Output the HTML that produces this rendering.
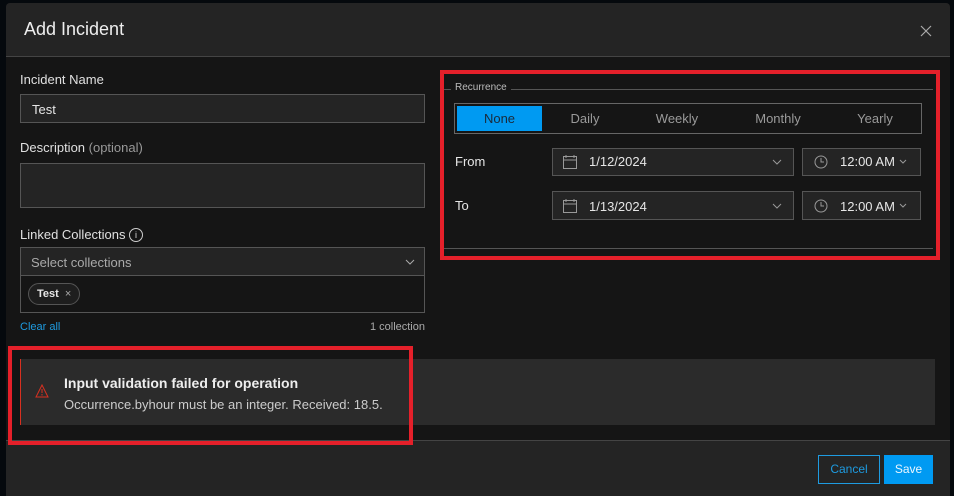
<!DOCTYPE html><html><head><style>
*{box-sizing:border-box;margin:0;padding:0}
body{width:954px;height:496px;background:#05090d;font-family:"Liberation Sans",sans-serif;position:relative;overflow:hidden;color:#e6e6e6}
.a{position:absolute}
.modal{left:6px;top:3px;width:944px;height:493px;background:#151515;border-radius:4px 4px 0 0;overflow:hidden}
.hdr{left:0;top:0;width:944px;height:54px;background:#242424;border-bottom:1px solid #444}
.inp{background:#242424;border:1px solid #555}
.lbl{font-size:13px;color:#e0e0e0}
.red{border:4px solid #e5202a}
.seg{font-size:13px;color:#9a9a9a;text-align:center;top:0;height:26px;line-height:26px}
.sm{font-size:13px;color:#e6e6e6}
</style></head><body>
<div class="a modal">
 <div class="a hdr"><div class="a" style="left:18px;top:16px;font-size:18px;color:#eee">Add Incident</div>
 <svg class="a" style="left:914px;top:22px" width="12" height="12"><path d="M1 1L11 11M11 1L1 11" stroke="#aaa" stroke-width="1.2"/></svg></div>
 <div class="a" style="left:0;top:437px;width:944px;height:56px;background:#242424;border-top:1px solid #444"></div>
</div>
<div class="a lbl" style="left:20px;top:72px">Incident Name</div>
<div class="a inp" style="left:20px;top:94px;width:405px;height:29px"><span class="a sm" style="left:11px;top:7px">Test</span></div>
<div class="a lbl" style="left:20px;top:140px">Description <span style="color:#999">(optional)</span></div>
<div class="a inp" style="left:20px;top:163px;width:405px;height:45px"></div>
<div class="a lbl" style="left:20px;top:227px">Linked Collections</div>
<div class="a" style="left:129px;top:228px;width:14px;height:14px;border:1px solid #ccc;border-radius:50%;font-size:9px;text-align:center;line-height:12px;color:#ddd">i</div>
<div class="a inp" style="left:20px;top:247px;width:405px;height:29px"><span class="a" style="left:10px;top:7px;font-size:13px;color:#aaa">Select collections</span><svg class="a" style="left:384px;top:11px" width="10" height="6"><path d="M1 1L5 5L9 1" stroke="#aaa" fill="none"/></svg></div>
<div class="a" style="left:20px;top:275px;width:405px;height:38px;border:1px solid #555;border-top:none"></div>
<div class="a" style="left:28px;top:283px;width:52px;height:22px;border:1px solid #555;border-radius:11px;background:#1e1e1e;font-size:11px;font-weight:bold;line-height:20px;padding-left:8px">Test <span style="font-weight:normal;color:#aaa;margin-left:3px">×</span></div>
<div class="a" style="left:20px;top:321px;font-size:11px;color:#1e9be0">Clear all</div>
<div class="a" style="left:366px;top:321px;width:59px;text-align:right;font-size:11px;color:#aaa">1 collection</div>

<div class="a red" style="left:440px;top:70px;width:500px;height:190px"></div>
<div class="a" style="left:444px;top:89px;width:489px;border-top:1px solid #555"></div>
<div class="a" style="left:451px;top:82px;padding:0 4px;background:#151515;font-size:10px;color:#bbb">Recurrence</div>
<div class="a" style="left:444px;top:248px;width:489px;border-top:1px solid #555"></div>
<div class="a" style="left:454px;top:103px;width:468px;height:31px;border:1px solid #666">
 <div class="a seg" style="left:2px;top:2px;width:85px;height:25px;background:#009af2;color:#1a2a3a">None</div>
 <div class="a seg" style="left:90px;top:2px;width:80px">Daily</div>
 <div class="a seg" style="left:182px;top:2px;width:80px">Weekly</div>
 <div class="a seg" style="left:283px;top:2px;width:80px">Monthly</div>
 <div class="a seg" style="left:380px;top:2px;width:80px">Yearly</div>
</div>
<div class="a sm" style="left:455px;top:154px">From</div>
<div class="a sm" style="left:455px;top:198px">To</div>
<div class="a inp" style="left:552px;top:148px;width:242px;height:28px"></div>
<div class="a inp" style="left:552px;top:191px;width:242px;height:29px"></div>
<div class="a inp" style="left:802px;top:148px;width:119px;height:28px"></div>
<div class="a inp" style="left:802px;top:191px;width:119px;height:29px"></div>
<svg class="a" style="left:0;top:0" width="954" height="496" fill="none" stroke="#999">
 <rect x="563.5" y="156.5" width="13" height="12"/><path d="M563 160h14M566 155v3M574 155v3"/>
 <rect x="563.5" y="200.5" width="13" height="12"/><path d="M563 204h14M566 199v3M574 199v3"/>
 <path d="M773 160l4 4 4-4M773 204l4 4 4-4M900 160l3 3 3-3M900 204l3 3 3-3"/>
 <circle cx="821" cy="162" r="6"/><path d="M821 158v4h3"/>
 <circle cx="821" cy="206" r="6"/><path d="M821 202v4h3"/>
</svg>
<div class="a sm" style="left:589px;top:154px">1/12/2024</div>
<div class="a sm" style="left:589px;top:199px">1/13/2024</div>
<div class="a sm" style="left:840px;top:154px">12:00 AM</div>
<div class="a sm" style="left:840px;top:199px">12:00 AM</div>

<div class="a" style="left:20px;top:359px;width:915px;height:66px;background:#2b2b2b;border-left:1px solid #d83020"></div>
<svg class="a" style="left:35px;top:384px" width="14" height="14" fill="none" stroke="#d83020"><path d="M7 1L13 13H1Z"/><path d="M7 5v4M7 10v1.5"/></svg>
<div class="a" style="left:64px;top:375px;font-size:14px;font-weight:bold;color:#eee">Input validation failed for operation</div>
<div class="a" style="left:64px;top:397px;font-size:13px;color:#ccc">Occurrence.byhour must be an integer. Received: 18.5.</div>
<div class="a red" style="left:8px;top:346px;width:405px;height:99px"></div>

<div class="a" style="left:818px;top:455px;width:62px;height:29px;border:1px solid #1e9be0;color:#1e9be0;font-size:12px;text-align:center;line-height:27px">Cancel</div>
<div class="a" style="left:884px;top:455px;width:49px;height:29px;background:#009af2;color:#eaf6ff;font-size:12px;text-align:center;line-height:29px">Save</div>
</body></html>
